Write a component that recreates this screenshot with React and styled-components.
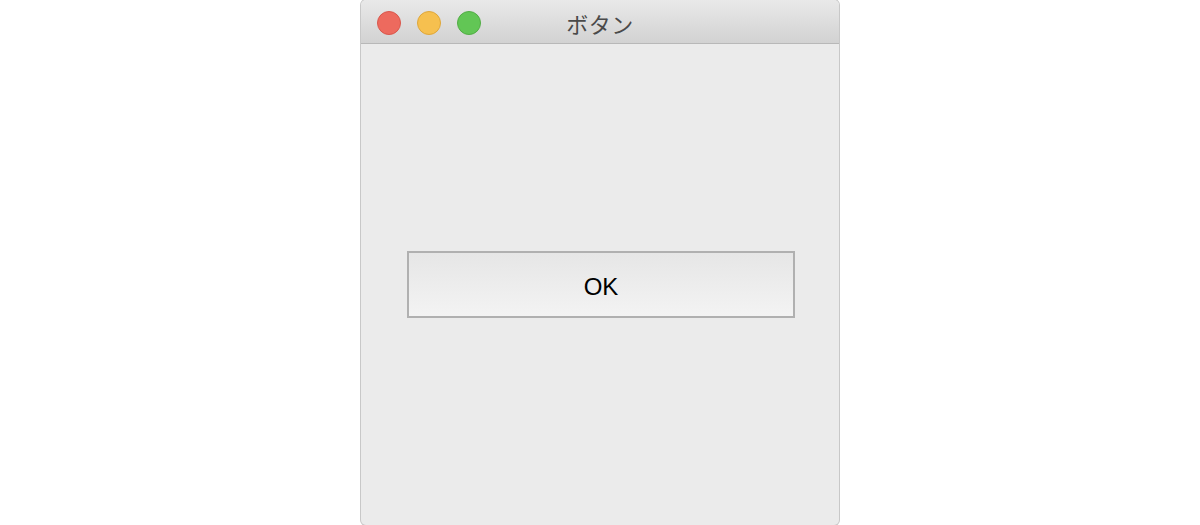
import React from "react";
import styled, { createGlobalStyle } from "styled-components";

const Global = createGlobalStyle`
  html, body { margin: 0; padding: 0; background: #ffffff; }
  body { font-family: "Liberation Sans", Arial, "Noto Sans CJK JP", sans-serif; }
`;

const Page = styled.div`
  display: flex;
  justify-content: center;
  width: 1200px;
  height: 525px;
  overflow: hidden;
`;

const Window = styled.div`
  width: 478px;
  height: 525px;
  display: flex;
  flex-direction: column;
  background: #ebebeb;
  border-radius: 5px;
  box-shadow: 0 0 0 1px #c8c8c8;
  overflow: hidden;
`;

const TitleBar = styled.div`
  position: relative;
  height: 43px;
  flex: none;
  display: flex;
  align-items: center;
  justify-content: center;
  background: linear-gradient(#e9e9e9, #d2d2d2);
  border-bottom: 1px solid #b8b8b8;
`;

const Lights = styled.div`
  position: absolute;
  left: 16px;
  top: 11px;
  display: flex;
  gap: 16px;
`;

const Light = styled.span`
  width: 24px;
  height: 24px;
  border-radius: 50%;
  box-sizing: border-box;
  background: ${(p) => p.$fill};
  border: 1px solid ${(p) => p.$edge};
`;

const Title = styled.div`
  font-family: "Noto Sans CJK JP", sans-serif;
  font-size: 22px;
  color: #4a4a4a;
  letter-spacing: 0.5px;
  margin-top: 2px;
`;

const Content = styled.div`
  flex: 1;
  display: flex;
  align-items: center;
  padding: 0 44px 0 46px;
`;

const Button = styled.button`
  flex: 1;
  height: 67px;
  margin-bottom: 1px;
  border: 2px solid #b0b0b0;
  background: linear-gradient(#e6e6e6, #f3f3f3);
  font-family: "Liberation Sans", Arial, sans-serif;
  font-size: 24px;
  color: #000;
  padding: 6px 0 0 0;
  cursor: default;
`;

export default function App() {
  return (
    <>
      <Global />
      <Page>
        <Window>
          <TitleBar>
            <Lights>
              <Light $fill="#ed6a5e" $edge="#d9574c" />
              <Light $fill="#f6c04f" $edge="#dfa73a" />
              <Light $fill="#62c655" $edge="#52ad45" />
            </Lights>
            <Title>ボタン</Title>
          </TitleBar>
          <Content>
            <Button>OK</Button>
          </Content>
        </Window>
      </Page>
    </>
  );
}
